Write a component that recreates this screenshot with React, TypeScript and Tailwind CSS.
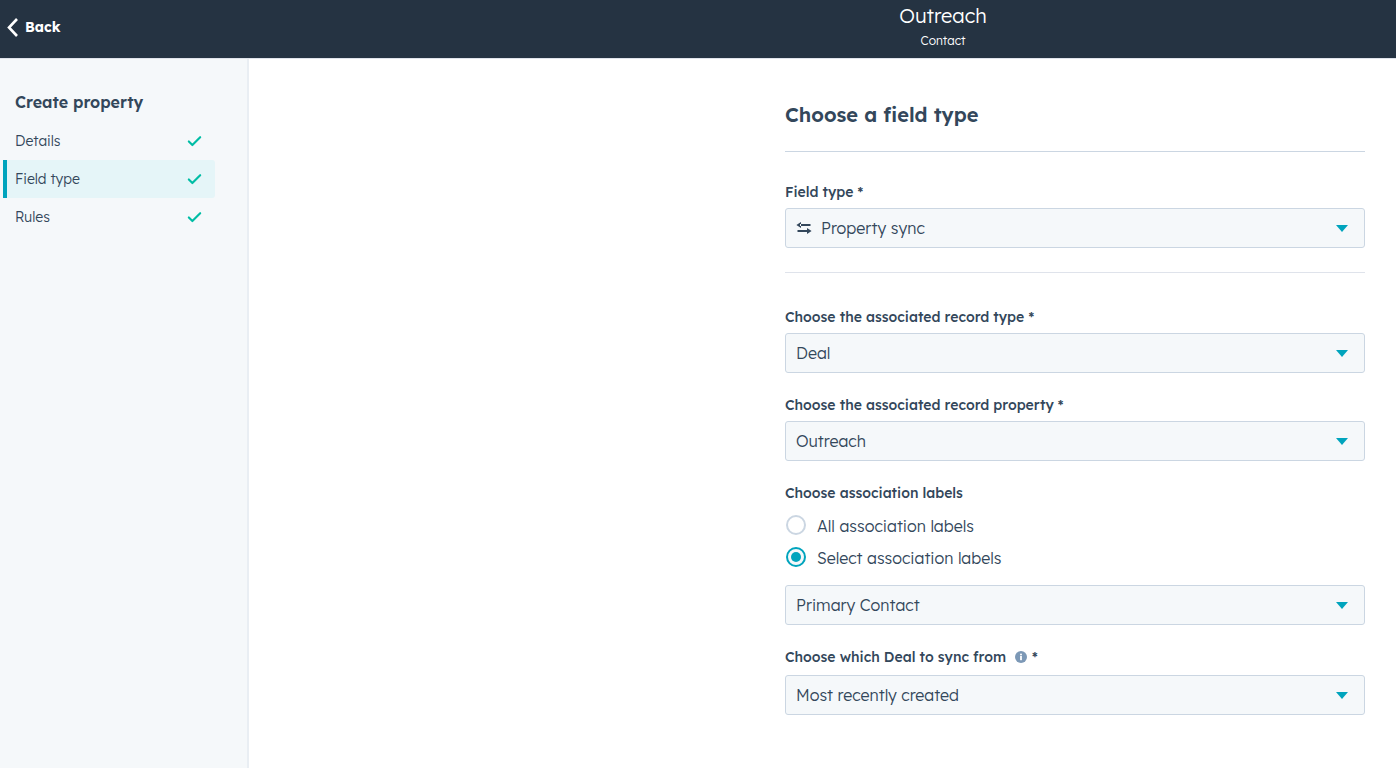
import { Check } from 'lucide-react';

const font = { fontFamily: 'Lexend, Inter, "Noto Sans", sans-serif' };

const STEPS = [
  { name: 'Details', active: false },
  { name: 'Field type', active: true },
  { name: 'Rules', active: false },
];

function Select({ value, icon }: { value: string; icon?: boolean }) {
  return (
    <div className="flex h-10 items-center justify-between rounded-[3px] border border-[#cbd6e2] bg-[#f5f8fa] pl-[10px] pr-[16px] text-[16px] font-light text-[#33475b]">
      <div className="flex items-center">
        {icon && (
          <svg width="16" height="12" viewBox="0 0 16 12" className="mr-[9px]">
            <path d="M5 0 L0.4 3 L5 6 Z M4 2 H14.5 V4 H4 Z" fill="#33475b" />
            <path d="M11 6 L15.6 9 L11 12 Z M1.5 8 H12 V10 H1.5 Z" fill="#33475b" />
          </svg>
        )}
        <span>{value}</span>
      </div>
      <svg width="12" height="7" viewBox="0 0 12 7">
        <path d="M0 0 H12 L6 7 Z" fill="#00a4bd" />
      </svg>
    </div>
  );
}

function Label({ children, gap = 'mb-[5px]' }: { children: React.ReactNode; gap?: string }) {
  return <div className={`flex h-[22px] items-center text-[14px] font-medium text-[#33475b] ${gap}`}>{children}</div>;
}

function Radio({ label, checked }: { label: string; checked?: boolean }) {
  return (
    <div className="flex h-8 items-center">
      <span
        className={`ml-px -mt-[2px] flex h-5 w-5 items-center justify-center rounded-full border-2 ${checked ? 'border-[#00a4bd] bg-[#f5f8fa]' : 'border-[#cbd6e2] bg-white'}`}
      >
        {checked && <span className="h-[10px] w-[10px] rounded-full bg-[#00a4bd]" />}
      </span>
      <span className="ml-[11px] text-[16px] font-light text-[#33475b]">{label}</span>
    </div>
  );
}

export default function App() {
  return (
    <div className="flex h-screen flex-col overflow-hidden bg-white" style={font}>
      <header className="relative flex h-[59px] shrink-0 items-center justify-center border-b border-[#dfe3eb] bg-[#253342] text-white">
        <div className="absolute left-[6px] top-[17px] flex items-center">
          <svg width="13" height="21" viewBox="0 0 13 21" fill="none">
            <path d="M11 2 L3 10.5 L11 19" stroke="#fff" strokeWidth="2.6" />
          </svg>
          <span className="ml-[6px] text-[14px] font-bold">Back</span>
        </div>
        <div className="-mt-[6px] ml-[490px] flex flex-col items-center">
          <div className="text-[20px] font-light leading-[30px]">Outreach</div>
          <div className="text-[12px] font-light leading-[20px]">Contact</div>
        </div>
      </header>
      <div className="flex min-h-0 flex-1">
        <aside className="w-[249px] shrink-0 border-r-2 border-[#e9eef3] bg-[#f5f8fa] pl-[3px] pt-[31px]">
          <div className="mb-[8px] pl-3 text-[16px] font-semibold leading-[24px] text-[#33475b]">Create property</div>
          {STEPS.map((step) => (
            <div
              key={step.name}
              className={`flex h-[38px] w-[212px] items-center justify-between rounded-r-[3px] pl-3 pr-[12px] text-[14px] font-light text-[#33475b] ${step.active ? 'border-l-[4px] border-[#00a4bd] !pl-2 bg-[#e5f5f8]' : ''}`}
            >
              <span>{step.name}</span>
              <Check className="h-[17px] w-[17px] text-[#00bda5]" strokeWidth={3} />
            </div>
          ))}
        </aside>
        <main className="flex flex-1 justify-end pr-[31px]">
          <div className="w-[580px] pt-[41px]">
            <h2 className="mb-[21px] text-[20px] font-semibold leading-[30px] text-[#33475b]">Choose a field type</h2>
            <div className="mb-[29px] h-px bg-[#cbd6e2]" />
            <Label>Field type *</Label>
            <Select value="Property sync" icon />
            <div className="mb-[33px] mt-6 h-px bg-[#dfe3eb]" />
            <Label>Choose the associated record type *</Label>
            <Select value="Deal" />
            <div className="mt-[21px]">
              <Label>Choose the associated record property *</Label>
              <Select value="Outreach" />
            </div>
            <div className="mt-[21px]">
              <Label gap="mb-[6px]">Choose association labels</Label>
              <Radio label="All association labels" />
              <Radio label="Select association labels" checked />
              <div className="mt-[11px]">
                <Select value="Primary Contact" />
              </div>
            </div>
            <div className="mt-[21px]">
              <Label gap="mb-[7px]">
                Choose which Deal to sync from
                <svg width="12" height="12" viewBox="0 0 12 12" className="ml-[9px] mr-[5px]">
                  <circle cx="6" cy="6" r="6" fill="#7c98b6" />
                  <rect x="5.1" y="5" width="1.8" height="4.2" fill="#fff" />
                  <circle cx="6" cy="3.4" r="1" fill="#fff" />
                </svg>
                *
              </Label>
              <Select value="Most recently created" />
            </div>
          </div>
        </main>
      </div>
    </div>
  );
}
